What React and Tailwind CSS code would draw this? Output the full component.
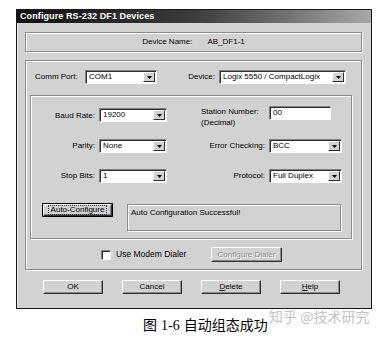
import React from "react";

const FONT = { fontFamily: '"Liberation Sans", Arial, sans-serif' };

function Raised({ className = "", children }) {
    return (
        <div
            className={`flex items-center justify-center border border-t-white border-l-white border-r-[#303030] border-b-[#303030] shadow-[inset_-1px_-1px_0_#8a8a8a] bg-[#d2d2d2] ${className}`}
        >
            {children}
        </div>
    );
}

function Sunken({ className = "", children }) {
    return (
        <div
            className={`flex items-center border border-t-[#808080] border-l-[#808080] border-r-white border-b-white shadow-[inset_1px_1px_0_#303030] bg-white ${className}`}
        >
            {children}
        </div>
    );
}

function Combo({ value, w }) {
    return (
        <Sunken className={`${w} h-[14px] shrink-0`}>
            <span className="flex-1 pl-[3px] text-[8px] leading-none text-black">{value}</span>
            <div className="w-[12px] h-[10px] mr-[1px] flex items-center justify-center border border-t-white border-l-white border-r-[#303030] border-b-[#303030] bg-[#d2d2d2]">
                <svg width="5" height="3" viewBox="0 0 5 3">
                    <path d="M0 0h5L2.5 3z" fill="#000" />
                </svg>
            </div>
        </Sunken>
    );
}

function Etched({ className = "", children }) {
    return (
        <div className={`border border-[#8a8a8a] shadow-[1px_1px_0_#fff,inset_1px_1px_0_#fff] ${className}`}>
            {children}
        </div>
    );
}

export default function App() {
    return (
        <div className="relative w-[378px] h-[338px] bg-white overflow-hidden" style={FONT}>
            <div className="pt-[9px] pl-[16px]">
                {/* Dialog window */}
                <div className="w-[356px] h-[300px] flex flex-col border border-[#1a1a1a] bg-[#d2d2d2] shadow-[inset_1px_1px_0_#e8e8e8]">
                    <div className="h-[13px] shrink-0 flex items-center pl-[3px] bg-gradient-to-r from-[#111] via-[#3c3c3c] to-[#a8a8a8]">
                        <span className="text-[9px] font-bold text-white leading-none tracking-[0.1px]">
                            Configure RS-232 DF1 Devices
                        </span>
                    </div>

                    <div className="flex flex-col pl-[8px] text-[8px] text-black">
                        {/* Device name */}
                        <Etched className="mt-[9px] w-[337px] h-[20px] flex items-center justify-center gap-[15px]">
                            <span>Device Name:</span>
                            <span>AB_DF1-1</span>
                        </Etched>

                        {/* Main group */}
                        <Etched className="mt-[8px] w-[337px] h-[210px] flex flex-col">
                            <div className="mt-[9px] pl-[9px] flex items-center h-[14px]">
                                <span className="w-[50px]">Comm Port:</span>
                                <Combo value="COM1" w="w-[72px]" />
                                <span className="w-[62px] text-right pr-[4px]">Device:</span>
                                <Combo value="Logix 5550 / CompactLogix" w="w-[127px]" />
                            </div>

                            <Etched className="mt-[11px] ml-[4px] w-[322px] h-[144px] flex flex-col">
                                {/* Row 1 */}
                                <div className="mt-[10px] flex items-start h-[20px]">
                                    <span className="w-[64px] text-right mt-[4px]">Baud Rate:</span>
                                    <div className="ml-[4px] mt-[2px]">
                                        <Combo value="19200" w="w-[68px]" />
                                    </div>
                                    <div className="ml-[34px] w-[64px] flex flex-col leading-[11px]">
                                        <span>Station Number:</span>
                                        <span>(Decimal)</span>
                                    </div>
                                    <Sunken className="ml-[4px] w-[62px] h-[14px]">
                                        <span className="pl-[3px] leading-none">00</span>
                                    </Sunken>
                                </div>
                                {/* Row 2 */}
                                <div className="mt-[13px] flex items-center h-[14px]">
                                    <span className="w-[64px] text-right">Parity:</span>
                                    <div className="ml-[4px]">
                                        <Combo value="None" w="w-[68px]" />
                                    </div>
                                    <span className="ml-[34px] w-[64px] text-right">Error Checking:</span>
                                    <div className="ml-[4px]">
                                        <Combo value="BCC" w="w-[73px]" />
                                    </div>
                                </div>
                                {/* Row 3 */}
                                <div className="mt-[16px] flex items-center h-[14px]">
                                    <span className="w-[64px] text-right">Stop Bits:</span>
                                    <div className="ml-[4px]">
                                        <Combo value="1" w="w-[68px]" />
                                    </div>
                                    <span className="ml-[34px] w-[64px] text-right">Protocol:</span>
                                    <div className="ml-[4px]">
                                        <Combo value="Full Duplex" w="w-[73px]" />
                                    </div>
                                </div>
                                {/* Auto configure */}
                                <div className="mt-[20px] pl-[11px] flex items-start">
                                    <div className="w-[71px] h-[14px] border border-black">
                                        <Raised className="w-full h-full">
                                            <span className="px-[2px] leading-[8px] outline-1 outline-dotted outline-[#333]">
                                                Auto-Configure
                                            </span>
                                        </Raised>
                                    </div>
                                    <Etched className="ml-[14px] mt-[1px] w-[214px] h-[27px] pl-[3px] pt-[2px]">
                                        Auto Configuration Successful!
                                    </Etched>
                                </div>
                            </Etched>

                            {/* Modem dialer */}
                            <div className="mt-[8px] pl-[75px] flex items-center h-[15px]">
                                <Sunken className="w-[10px] h-[10px]" />
                                <span className="ml-[5px] w-[95px] text-[8.5px]">Use Modem Dialer</span>
                                <Raised className="w-[71px] h-[15px]">
                                    <span className="text-[#8c8c8c] [text-shadow:1px_1px_0_#fff]">Configure Dialer</span>
                                </Raised>
                            </div>
                        </Etched>

                        {/* Bottom buttons */}
                        <div className="mt-[10px] pl-[18px] flex gap-[19px]">
                            <Raised className="w-[60px] h-[14px]">OK</Raised>
                            <Raised className="w-[60px] h-[14px]">Cancel</Raised>
                            <Raised className="w-[60px] h-[14px]">
                                <span><span className="underline">D</span>elete</span>
                            </Raised>
                            <Raised className="w-[60px] h-[14px]">
                                <span><span className="underline">H</span>elp</span>
                            </Raised>
                        </div>
                    </div>
                </div>
            </div>

            {/* Caption */}
            <div
                className="mt-[10px] ml-[143px] flex items-center gap-[4px] text-[14px] leading-none text-black"
                style={{ fontFamily: '"Liberation Serif", "Noto Sans CJK SC", serif' }}
            >
                <span>图</span>
                <span>1-6</span>
                <span>自动组态成功</span>
            </div>

            {/* Watermark */}
            <div
                className="absolute left-[269px] top-[309px] text-[14px] leading-none text-[#c4c4c4]"
                style={{ fontFamily: '"Noto Sans CJK SC", sans-serif' }}
            >
                知乎 @技术研究
            </div>
        </div>
    );
}
